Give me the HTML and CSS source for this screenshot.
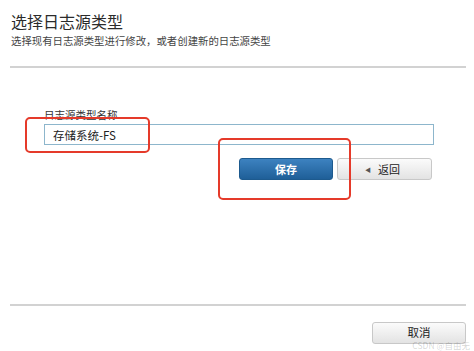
FILE: index.html
```html
<!DOCTYPE html>
<html lang="zh-CN">
<head>
  <meta charset="UTF-8" />
  <title>选择日志源类型</title>
  <link rel="stylesheet" href="styles.css">
</head>
<body>
  <div class="dialog">
    <div class="dialog-header">
      <h1 class="dialog-title">选择日志源类型</h1>
      <p class="dialog-desc">选择现有日志源类型进行修改，或者创建新的日志源类型</p>
    </div>
    <hr class="rule">

    <div class="form">
      <label class="field-label" for="typeName">日志源类型名称</label>
      <input id="typeName" class="field-input" type="text" value="存储系统-FS">
      <div class="actions">
        <button class="btn btn-primary">保存</button>
        <button class="btn btn-back"><span class="tri">◀</span>返回</button>
      </div>
    </div>

    <div class="dialog-footer">
      <hr class="rule">
      <div class="footer-actions">
        <button class="btn btn-cancel">取消</button>
      </div>
    </div>

    <!-- 注释用的红框 -->
    <div class="mark mark-input"></div>
    <div class="mark mark-save"></div>
    <div class="watermark">CSDN @自由无</div>
  </div>
</body>
</html>
```

FILE: styles.css
```css
body {
  margin: 0;
  font-family: "Noto Sans CJK SC", "Liberation Sans", sans-serif;
  background: #fff;
  color: #333;
}

.dialog {
  position: relative;
  height: 351px;
  display: flex;
  flex-direction: column;
  overflow: hidden;
}

.dialog-header {
  padding: 11px 0 0 11px;
}

.dialog-title {
  margin: 0;
  font-size: 16px;
  line-height: 20px;
  font-weight: normal;
  color: #2b2b2b;
}

.dialog-desc {
  margin: 3px 0 0;
  font-size: 10.4px;
  line-height: 14px;
  color: #444;
}

.rule {
  margin: 0 8px 0 10px;
  border: none;
  height: 2px;
  background: #d2d2d2;
}

.dialog-header + .rule {
  margin-top: 18px;
}

.form {
  padding: 40px 40px 0 44px;
  display: flex;
  flex-direction: column;
}

.field-label {
  font-size: 10.5px;
  line-height: 14px;
  color: #333;
}

.field-input {
  margin-top: 2px;
  height: 21px;
  box-sizing: border-box;
  border: 1px solid #8db6cc;
  padding: 0 8px;
  font-family: inherit;
  font-size: 11.5px;
  color: #222;
  outline: none;
}

.actions {
  display: flex;
  justify-content: flex-end;
  gap: 4px;
  margin: 13px 2px 0 0;
}

.btn {
  width: 95px;
  height: 22px;
  box-sizing: border-box;
  border-radius: 3px;
  font-family: inherit;
  font-size: 11px;
  padding: 0;
  cursor: pointer;
}

.btn-primary {
  width: 94px;
  border: 1px solid #1d5a8e;
  background: linear-gradient(#3d82c0, #1f5f98);
  color: #fff;
  font-weight: bold;
}

.btn-back,
.btn-cancel {
  border: 1px solid #c8c8c8;
  background: linear-gradient(#fbfbfb, #e3e3e3);
  color: #222;
}

.btn-back {
  display: flex;
  align-items: center;
  justify-content: center;
  gap: 7px;
  padding-right: 4px;
}

.tri {
  font-size: 6px;
  color: #555;
}

.dialog-footer {
  margin-top: auto;
  padding-bottom: 7px;
}

.footer-actions {
  display: flex;
  justify-content: flex-end;
  padding: 16px 8px 0 0;
}

.btn-cancel {
  width: 94px;
  font-size: 11.5px;
  line-height: 14px;
  padding-bottom: 3px;
}

.mark {
  position: absolute;
  border: 2px solid #e53a2a;
  border-radius: 5px;
  box-sizing: border-box;
}

.mark-input {
  left: 25px;
  top: 117px;
  width: 125px;
  height: 36px;
}

.mark-save {
  left: 218px;
  top: 138px;
  width: 133px;
  height: 62px;
}

.watermark {
  position: absolute;
  right: 4px;
  bottom: 1px;
  font-size: 8.5px;
  line-height: 10px;
  color: rgba(0, 0, 0, 0.18);
}
```
